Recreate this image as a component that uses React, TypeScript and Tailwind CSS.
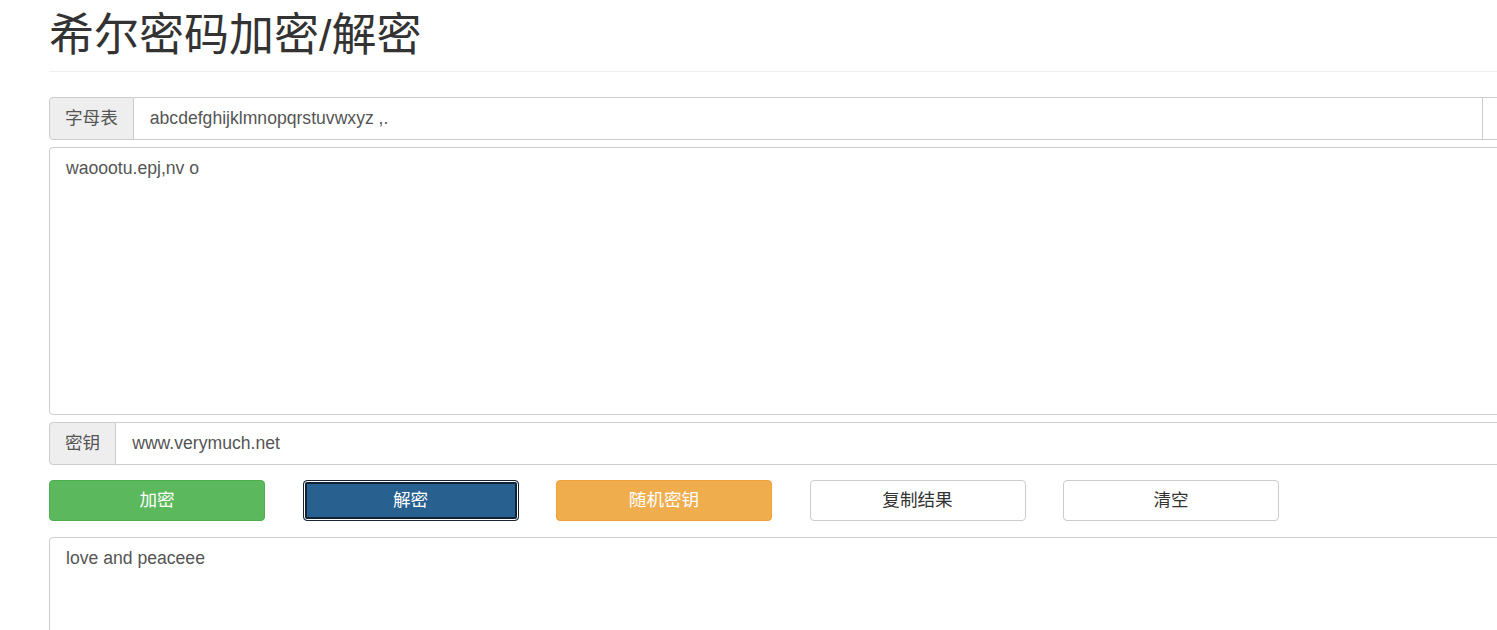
const font = { fontFamily: '"Liberation Sans", "Noto Sans CJK SC", sans-serif' };

const buttons = [
  { label: '加密', cls: 'bg-[#5cb85c] border border-[#4cae4c] text-white' },
  {
    label: '解密',
    cls: 'bg-[#286090] border border-[#1a2633] text-white shadow-[inset_0_0_0_1px_#ffffff,inset_0_0_0_3px_#0f2335]',
  },
  { label: '随机密钥', cls: 'bg-[#f0ad4e] border border-[#eea236] text-white' },
  { label: '复制结果', cls: 'bg-white border border-[#cccccc] text-[#333333]' },
  { label: '清空', cls: 'bg-white border border-[#cccccc] text-[#333333]' },
];

export default function App() {
  return (
    <div className="w-full h-[630px] overflow-hidden bg-white" style={font}>
      <div className="pl-[49px] w-[1600px]">
        {/* Header */}
        <div className="pt-[7px] pb-[7px] border-b border-[#eeeeee]">
          <h1 className="text-[45px] leading-[57px] font-normal text-[#333333]">希尔密码加密/解密</h1>
        </div>

        {/* Alphabet */}
        <div className="mt-[25px] flex h-[43px] text-[17.6px] text-[#555555]">
          <div className="flex items-center px-[15px] bg-[#eeeeee] border border-[#cccccc] rounded-l-[4px]">
            字母表
          </div>
          <div className="w-[1349px] flex items-center px-[16px] border border-l-0 border-[#cccccc]">
            abcdefghijklmnopqrstuvwxyz ,.
          </div>
          <div className="w-[80px] border border-l-0 border-[#cccccc] rounded-r-[4px] bg-white" />
        </div>

        {/* Cipher text */}
        <div className="mt-[7px] h-[268px] w-[1500px] border border-[#cccccc] rounded-[4px] px-[16px] pt-[8px] text-[17.6px] leading-[24px] text-[#555555]">
          waoootu.epj,nv o
        </div>

        {/* Key */}
        <div className="mt-[7px] flex h-[43px] w-[1500px] text-[17.6px] text-[#555555]">
          <div className="flex items-center px-[15px] bg-[#eeeeee] border border-[#cccccc] rounded-l-[4px]">
            密钥
          </div>
          <div className="flex-1 flex items-center px-[16px] border border-l-0 border-[#cccccc] rounded-r-[4px]">
            www.verymuch.net
          </div>
        </div>

        {/* Buttons */}
        <div className="mt-[15px] flex">
          {buttons.map((b) => (
            <div key={b.label} className="w-[253.5px]">
              <button
                className={`w-[216px] h-[41px] rounded-[4px] text-[17.6px] flex items-center justify-center ${b.cls}`}
              >
                {b.label}
              </button>
            </div>
          ))}
        </div>

        {/* Result */}
        <div className="mt-[16px] h-[200px] w-[1500px] border border-[#cccccc] rounded-[4px] px-[16px] pt-[8px] text-[17.6px] leading-[24px] text-[#555555]">
          love and peaceee
        </div>
      </div>
    </div>
  );
}
